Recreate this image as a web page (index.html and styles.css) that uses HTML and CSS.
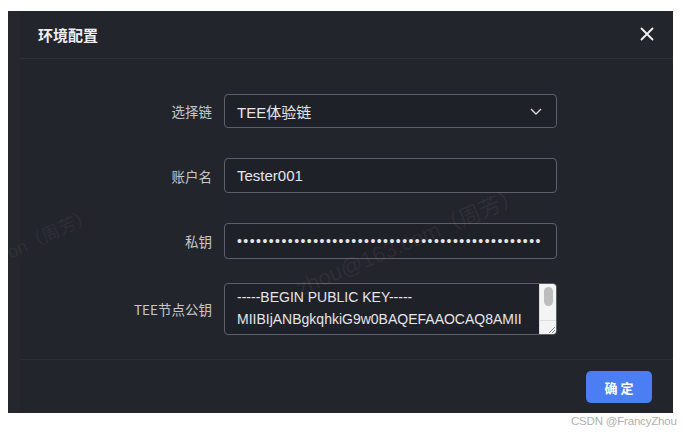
FILE: index.html
```html
<!DOCTYPE html>
<html>
<head>
<meta charset="utf-8" />
<title>环境配置</title>
<link rel="stylesheet" href="styles.css">
</head>
<body>
<div class="page">
	<div class="dialog">
		<div class="dlg-head">
			<span class="dlg-title">环境配置</span>
			<span class="dlg-close">
				<svg width="14" height="14" viewBox="0 0 14 14"><path d="M1.5 1.5 L12.5 12.5 M12.5 1.5 L1.5 12.5" stroke="#f2f2f2" stroke-width="1.8" stroke-linecap="round" fill="none"/></svg>
			</span>
		</div>
		<div class="dlg-body">
			<div class="row r1">
				<label>选择链</label>
				<div class="field select">
					<span>TEE体验链</span>
					<svg width="12" height="7" viewBox="0 0 12 7"><path d="M1 1 L6 6 L11 1" stroke="#d8d8da" stroke-width="1.4" fill="none"/></svg>
				</div>
			</div>
			<div class="row r2">
				<label>账户名</label>
				<div class="field">Tester001</div>
			</div>
			<div class="row r3">
				<label>私钥</label>
				<div class="field pwd"><span class="dots">••••••••••••••••••••••••••••••••••••••••••••••••</span></div>
			</div>
			<div class="row r4">
				<label>TEE节点公钥</label>
				<div class="field area">
					<div class="area-text">
						<div>-----BEGIN PUBLIC KEY-----</div>
						<div>MIIBIjANBgkqhkiG9w0BAQEFAAOCAQ8AMII</div>
					</div>
					<div class="scroll">
						<div class="thumb"></div>
						<div class="grip">
							<svg width="9" height="9" viewBox="0 0 9 9"><path d="M8 2 L2 8 M8 5 L5 8" stroke="#888" stroke-width="1"/></svg>
						</div>
					</div>
				</div>
			</div>
		</div>
		<div class="dlg-foot">
			<span class="btn-ok">确 定</span>
		</div>
	</div>
	<div class="csdn">CSDN @FrancyZhou</div>
	<span class="wm wm1">on（周芳）</span>
	<span class="wm wm2">zhou@163.com（周芳）</span>
</div>
</body>
</html>
```
FILE: styles.css
```css
*{ margin:0; padding:0; box-sizing:border-box;}
body{ background:#fff; font-family:"Liberation Sans","Noto Sans CJK SC",sans-serif; overflow:hidden;}
.page{ position:relative; width:685px; height:434px; padding:11px 0 0 8px;}
.dialog{ width:665px; height:402px; background:#23252d; border-left:12px solid #26272c; display:flex; flex-direction:column;}
.dlg-head{ height:48px; border-bottom:1px solid #2f3139; display:flex; align-items:center; justify-content:space-between; padding:0 19px 0 18px;}
.dlg-title{ color:#eeeef0; font-size:15px; font-weight:bold; font-family:"Noto Sans CJK SC",sans-serif;}
.dlg-close{ display:flex; margin-top:-2px;}
.dlg-body{ padding-top:35px; height:301px; border-bottom:1px solid #2c2e36;}
.row{ display:flex; align-items:center;}
.row label{ width:204px; text-align:right; padding-right:12px; color:#c6c7cb; font-size:13.5px; font-family:"Noto Sans CJK SC",sans-serif;}
.field{ width:333px; border:1px solid #5e6069; border-radius:4px; background:#1f2128; color:#e6e6e8; font-size:15px; padding:0 12px; display:flex; align-items:center;}
.r1 .field{ height:34px;}
.r2 .field{ height:35px;}
.r3 .field{ height:36px;}
.r4 .field{ height:52px;}
.r1, .r2{ margin-bottom:30px;}
.r3{ margin-bottom:24px;}
.select{ justify-content:space-between; padding-right:14px;}
.pwd{ padding-right:8px;}
.dots{ font-size:14px; letter-spacing:1.45px; color:#e6e6e8; white-space:nowrap;}
.area{ padding:0; align-items:stretch; overflow:hidden;}
.area-text{ flex:1; padding:2px 0 0 12px; font-size:14px; line-height:22px; white-space:nowrap; overflow:hidden;}
.scroll{ width:17px; background:#f4f4f4; display:flex; flex-direction:column; align-items:center; border-left:1px solid #ddd;}
.thumb{ width:9px; height:19px; border-radius:5px; background:#bdbdbd; margin-top:3px;}
.grip{ margin-top:auto; width:100%; height:14px; border-top:1px solid #ddd; display:flex; justify-content:flex-end; align-items:flex-end;}
.dlg-foot{ flex:1; display:flex; justify-content:flex-end; align-items:flex-start; padding:11px 21px 0 0;}
.btn-ok{ width:66px; height:32px; border-radius:5px; background:#4b7ef2; color:#fff; font-size:13px; font-weight:bold; font-family:"Noto Sans CJK SC",sans-serif; display:flex; align-items:center; justify-content:center;}
.csdn{ margin:2px 0 0 563px; font-size:11.5px; color:#b0b0b0; white-space:nowrap; letter-spacing:-0.2px;}
.wm{ position:absolute; color:rgba(128,128,128,0.12); font-size:18px; white-space:nowrap; transform-origin:left top; font-family:"Liberation Sans","Noto Sans CJK SC",sans-serif;}
.wm1{ left:2px; top:240px; transform:rotate(-25deg);}
.wm2{ left:290px; top:272px; font-size:22px; transform:rotate(-23deg);}
```
